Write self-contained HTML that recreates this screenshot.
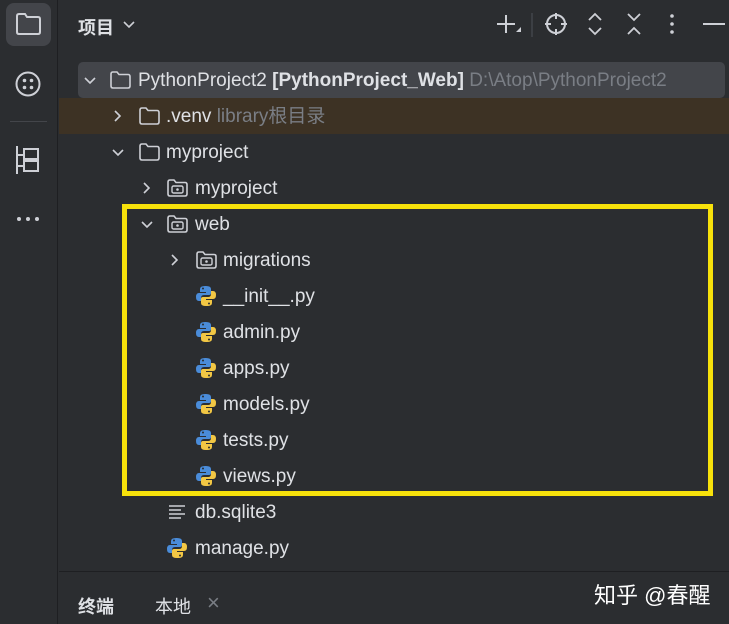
<!DOCTYPE html>
<html><head><meta charset="utf-8"><style>
*{margin:0;padding:0;box-sizing:border-box}
body{width:729px;height:624px;background:#2b2d30;font-family:"Liberation Sans","Noto Sans CJK SC",sans-serif;color:#dfe1e5;position:relative;overflow:hidden}
.side{position:absolute;left:0;top:0;width:58px;height:624px;border-right:1px solid #1e1f22;background:#2b2d30}
.side svg{position:absolute}
.row{position:absolute;height:36px;line-height:38px;font-size:19px;white-space:nowrap;left:0;right:0}
.row span,.row svg{position:absolute}
.g{color:#7a7e85}
svg{overflow:visible}
</style></head><body>
<div class="side">
  <div style="position:absolute;left:6px;top:3px;width:45px;height:43px;background:#43454a;border-radius:8px"></div>
  <svg style="left:16px;top:13px" width="26" height="22"><path d="M1 3 Q1 1 3 1 H9 L11 4 H22 Q24 4 24 6 V19 Q24 21 22 21 H3 Q1 21 1 19 Z" fill="none" stroke="#ced0d6" stroke-width="2"/></svg>
  <svg style="left:15px;top:71px" width="26" height="26"><circle cx="13" cy="13" r="11.5" fill="none" stroke="#ced0d6" stroke-width="2"/><circle cx="9.5" cy="9.5" r="1.8" fill="#ced0d6"/><circle cx="16.5" cy="9.5" r="1.8" fill="#ced0d6"/><circle cx="9.5" cy="16.5" r="1.8" fill="#ced0d6"/><circle cx="16.5" cy="16.5" r="1.8" fill="#ced0d6"/></svg>
  <div style="position:absolute;left:10px;top:121px;width:37px;height:1px;background:#43454a"></div>
  <svg style="left:16px;top:146px" width="24" height="28"><path d="M1 0 V28 M1 9 H7 M1 20 H7" stroke="#ced0d6" stroke-width="2" fill="none"/><rect x="8" y="3" width="14" height="10" fill="none" stroke="#ced0d6" stroke-width="2"/><rect x="8" y="15" width="14" height="10" fill="none" stroke="#ced0d6" stroke-width="2"/></svg>
  <svg style="left:16px;top:216px" width="26" height="6"><circle cx="3" cy="3" r="2" fill="#ced0d6"/><circle cx="12" cy="3" r="2" fill="#ced0d6"/><circle cx="21" cy="3" r="2" fill="#ced0d6"/></svg>
</div>
<div style="position:absolute;left:78px;top:14px;font-size:18px;font-weight:bold">项目</div>
<svg style="left:123px;top:21px;position:absolute" width="12" height="8"><path d="M1 1 L6 6 L11 1" stroke="#ced0d6" stroke-width="1.6" fill="none"/></svg>
<svg style="position:absolute;left:495px;top:12px" width="230" height="26">
  <path d="M2 12 H20 M11 3 V21" stroke="#ced0d6" stroke-width="2"/><path d="M21 20 L26 15 V20 Z" fill="#ced0d6"/>
  <line x1="37" y1="1" x2="37" y2="25" stroke="#4e5157" stroke-width="1"/>
  <circle cx="61" cy="12" r="9" fill="none" stroke="#ced0d6" stroke-width="2"/><path d="M61 1 V7 M61 17 V23 M50 12 H56 M66 12 H72" stroke="#ced0d6" stroke-width="2"/>
  <path d="M94 8 L100 2 L106 8 M94 16 L100 22 L106 16" stroke="#ced0d6" stroke-width="1.8" fill="none"/>
  <path d="M133 2 L139 8 L145 2 M133 22 L139 16 L145 22" stroke="#ced0d6" stroke-width="1.8" fill="none"/>
  <circle cx="177" cy="4" r="1.8" fill="#ced0d6"/><circle cx="177" cy="12" r="1.8" fill="#ced0d6"/><circle cx="177" cy="20" r="1.8" fill="#ced0d6"/>
  <path d="M208 12 H230" stroke="#ced0d6" stroke-width="2"/>
</svg>
<div style="position:absolute;left:78px;top:62px;width:647px;height:36px;background:#43454a;border-radius:5px"></div>
<div style="position:absolute;left:59px;top:98px;width:670px;height:36px;background:#3d3224"></div>

<svg width="0" height="0" style="position:absolute"><defs>
<g id="fold"><path d="M1 3 Q1 1 3 1 H7 L9 3.5 H18 Q20 3.5 20 5.5 V15 Q20 17 18 17 H3 Q1 17 1 15 Z" fill="none" stroke="#ced0d6" stroke-width="1.6"/></g>
<g id="pfold"><path d="M1 3 Q1 1 3 1 H7 L9 3.5 H18 Q20 3.5 20 5.5 V15 Q20 17 18 17 H3 Q1 17 1 15 Z" fill="none" stroke="#ced0d6" stroke-width="1.6"/><rect x="5" y="7" width="11" height="7" rx="1.5" fill="none" stroke="#ced0d6" stroke-width="1.4"/><circle cx="10.5" cy="10.5" r="1.3" fill="#ced0d6"/></g>
<g id="py"><path d="M9 1 Q4 1 4 4 V7 H10 V8 H3 Q0 8 0 12 Q0 16 3 16 H5 V13 Q5 10 8 10 H13 Q15 10 15 8 V4 Q15 1 10 1 Z" fill="#4a8cd9"/><path d="M11 21 Q16 21 16 18 V15 H10 V14 H17 Q20 14 20 10 Q20 6 17 6 H15 V9 Q15 12 12 12 H7 Q5 12 5 14 V18 Q5 21 10 21 Z" fill="#f2c744"/><circle cx="7" cy="3.5" r="1" fill="#2b2d30"/><circle cx="13" cy="18.5" r="1" fill="#2b2d30"/></g>
<path id="cr" d="M1 1 L6 6 L1 11" stroke="#ced0d6" stroke-width="1.6" fill="none"/>
<path id="cd" d="M1 1 L6 6 L11 1" stroke="#ced0d6" stroke-width="1.6" fill="none"/>
</defs></svg>

<div class="row" style="top:62px"><svg style="left:84px;top:15px" width="12" height="8"><use href="#cd"/></svg><svg style="left:110px;top:9px" width="22" height="18"><use href="#fold"/></svg><span style="left:138px">PythonProject2 <b>[PythonProject_Web]</b> <span class="g" style="position:static">D:\Atop\PythonProject2</span></span></div>
<div class="row" style="top:98px"><svg style="left:114px;top:12px" width="8" height="12"><use href="#cr"/></svg><svg style="left:139px;top:9px" width="22" height="18"><use href="#fold"/></svg><span style="left:166px">.venv <span class="g" style="position:static">library根目录</span></span></div>
<div class="row" style="top:134px"><svg style="left:112px;top:15px" width="12" height="8"><use href="#cd"/></svg><svg style="left:139px;top:9px" width="22" height="18"><use href="#fold"/></svg><span style="left:166px">myproject</span></div>
<div class="row" style="top:170px"><svg style="left:143px;top:12px" width="8" height="12"><use href="#cr"/></svg><svg style="left:167px;top:9px" width="22" height="18"><use href="#pfold"/></svg><span style="left:195px">myproject</span></div>
<div class="row" style="top:206px"><svg style="left:141px;top:15px" width="12" height="8"><use href="#cd"/></svg><svg style="left:167px;top:9px" width="22" height="18"><use href="#pfold"/></svg><span style="left:195px">web</span></div>
<div class="row" style="top:242px"><svg style="left:171px;top:12px" width="8" height="12"><use href="#cr"/></svg><svg style="left:196px;top:9px" width="22" height="18"><use href="#pfold"/></svg><span style="left:223px">migrations</span></div>
<div class="row" style="top:278px"><svg style="left:196px;top:7px" width="22" height="22"><use href="#py"/></svg><span style="left:223px">__init__.py</span></div>
<div class="row" style="top:314px"><svg style="left:196px;top:7px" width="22" height="22"><use href="#py"/></svg><span style="left:223px">admin.py</span></div>
<div class="row" style="top:350px"><svg style="left:196px;top:7px" width="22" height="22"><use href="#py"/></svg><span style="left:223px">apps.py</span></div>
<div class="row" style="top:386px"><svg style="left:196px;top:7px" width="22" height="22"><use href="#py"/></svg><span style="left:223px">models.py</span></div>
<div class="row" style="top:422px"><svg style="left:196px;top:7px" width="22" height="22"><use href="#py"/></svg><span style="left:223px">tests.py</span></div>
<div class="row" style="top:458px"><svg style="left:196px;top:7px" width="22" height="22"><use href="#py"/></svg><span style="left:223px">views.py</span></div>
<div class="row" style="top:494px"><svg style="left:168px;top:10px" width="18" height="16"><path d="M1 2 H17 M1 6 H13 M1 10 H17 M1 14 H13" stroke="#ced0d6" stroke-width="1.5"/></svg><span style="left:195px">db.sqlite3</span></div>
<div class="row" style="top:530px"><svg style="left:167px;top:7px" width="22" height="22"><use href="#py"/></svg><span style="left:195px">manage.py</span></div>

<div style="position:absolute;left:122px;top:204px;width:591px;height:292px;border:5px solid #f7e10b"></div>
<div style="position:absolute;left:59px;top:571px;width:670px;height:1px;background:#1e1f22"></div>
<div style="position:absolute;left:78px;top:593px;font-size:18px;font-weight:bold">终端</div>
<div style="position:absolute;left:155px;top:593px;font-size:18px">本地</div>
<div style="position:absolute;left:207px;top:590px;font-size:22px;color:#7a7e85">×</div>
<div style="position:absolute;left:594px;top:578px;font-size:22px;color:#fff">知乎 @春醒</div>
</body></html>
